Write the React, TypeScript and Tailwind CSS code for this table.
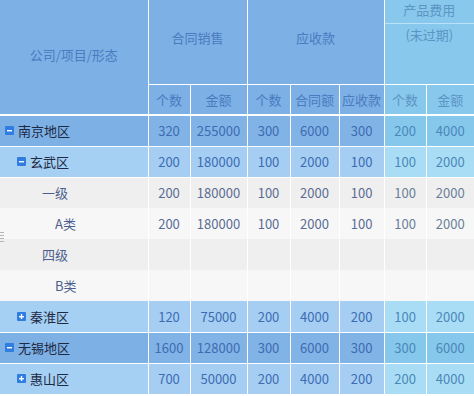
import React from "react";

type Row = {
  name: string;
  level: 1 | 2 | 3 | 4;
  icon?: "minus" | "plus";
  vals: string[];
};

const rows: Row[] = [
  { name: "南京地区", level: 1, icon: "minus", vals: ["320", "255000", "300", "6000", "300", "200", "4000"] },
  { name: "玄武区", level: 2, icon: "minus", vals: ["200", "180000", "100", "2000", "100", "100", "2000"] },
  { name: "一级", level: 3, vals: ["200", "180000", "100", "2000", "100", "100", "2000"] },
  { name: "A类", level: 4, vals: ["200", "180000", "100", "2000", "100", "100", "2000"] },
  { name: "四级", level: 3, vals: ["", "", "", "", "", "", ""] },
  { name: "B类", level: 4, vals: ["", "", "", "", "", "", ""] },
  { name: "秦淮区", level: 2, icon: "plus", vals: ["120", "75000", "200", "4000", "200", "100", "2000"] },
  { name: "无锡地区", level: 1, icon: "minus", vals: ["1600", "128000", "300", "6000", "300", "300", "6000"] },
  { name: "惠山区", level: 2, icon: "plus", vals: ["700", "50000", "200", "4000", "200", "200", "4000"] },
];

function ToggleIcon({ type }: { type: "minus" | "plus" }) {
  return (
    <svg width="9" height="9" viewBox="0 0 9 9" className="shrink-0">
      <rect x="0" y="0" width="9" height="9" rx="1" fill="#2f7de1" />
      <rect x="2" y="4" width="5" height="1.4" fill="#fff" />
      {type === "plus" && <rect x="3.8" y="2" width="1.4" height="5" fill="#fff" />}
    </svg>
  );
}

function rowStyle(r: Row, i: number) {
  if (r.level === 1) {
    return {
      name: "bg-[#7db0e5] text-[#1d2a44]",
      num: "bg-[#82b3e6] text-[#3c6cb2]",
      prod: "bg-[#86c7ec] text-[#4a88b8]",
    };
  }
  if (r.level === 2) {
    return {
      name: "bg-[#a5cff3] text-[#1d2a44]",
      num: "bg-[#a5cef2] text-[#3c6cb2]",
      prod: "bg-[#a9ddf5] text-[#4a88b8]",
    };
  }
  const odd = i % 2 === 0;
  return {
    name: odd ? "bg-[#efefef] text-[#4c5f8e]" : "bg-[#f7f7f7] text-[#4c5f8e]",
    num: odd ? "bg-[#efefef] text-[#5a6c92]" : "bg-[#f7f7f7] text-[#5a6c92]",
    prod: odd ? "bg-[#efefef] text-[#6a8099]" : "bg-[#f7f7f7] text-[#6a8099]",
  };
}

export default function App() {
  return (
    <div
      className="relative w-[474px] h-[396px] overflow-hidden bg-white text-[13px]"
      style={{ fontFamily: '"Noto Sans CJK SC", "Noto Sans", sans-serif' }}
    >
      <table className="w-[474px] table-fixed border-collapse">
        <colgroup>
          <col className="w-[148px]" />
          <col className="w-[42px]" />
          <col className="w-[57px]" />
          <col className="w-[43px]" />
          <col className="w-[49px]" />
          <col className="w-[45px]" />
          <col className="w-[42px]" />
          <col className="w-[48px]" />
        </colgroup>
        <thead>
          <tr className="h-[23px]">
            <th rowSpan={3} className="bg-[#7db0e5] text-[#4a7bc0] font-normal border border-white border-b-2 border-t-0 border-l-0 pb-[4px]">
              公司/项目/形态
            </th>
            <th colSpan={2} rowSpan={2} className="bg-[#7db0e5] text-[#4a7bc0] font-normal border border-white border-t-0 pb-[8px]">
              合同销售
            </th>
            <th colSpan={3} rowSpan={2} className="bg-[#7db0e5] text-[#4a7bc0] font-normal border border-white border-t-0 pb-[8px]">
              应收款
            </th>
            <th colSpan={2} className="bg-[#87c8ec] text-[#5c94c4] font-normal border border-[#b8e2f6] border-t-0 border-r-0 border-l-white leading-none pb-[3px]">
              产品费用
            </th>
          </tr>
          <tr className="h-[61px]">
            <th colSpan={2} className="bg-[#87c8ec] text-[#5c94c4] font-normal align-top pt-[4px] border border-white border-t-[#b8e2f6] border-r-0 leading-none">
              (未过期)
            </th>
          </tr>
          <tr className="h-[31px]">
            {["个数", "金额", "个数", "合同额", "应收款"].map((t, i) => (
              <th key={i} className="bg-[#7db0e5] text-[#4a7bc0] font-normal border border-white border-b-2 px-0 whitespace-nowrap">
                {t}
              </th>
            ))}
            {["个数", "金额"].map((t, i) => (
              <th key={i} className={`bg-[#87c8ec] text-[#5c94c4] font-normal border border-white border-b-2 ${i === 1 ? "border-r-0" : ""}`}>
                {t}
              </th>
            ))}
          </tr>
        </thead>
        <tbody>
          {rows.map((r, i) => {
            const s = rowStyle(r, i);
            const pad =
              r.level === 1 ? "pl-[5px]" : r.level === 2 ? "pl-[17px]" : r.level === 3 ? "pl-[42px]" : "pl-[55px]";
            const bc = r.level <= 2 ? "border-white" : "border-white border-y-transparent";
            return (
              <tr key={i} className="h-[31px]">
                <td className={`${s.name} ${bc} border border-l-0 ${pad} whitespace-nowrap`}>
                  <div className="flex items-center gap-[4px]">
                    {r.icon && <ToggleIcon type={r.icon} />}
                    <span>{r.name}</span>
                  </div>
                </td>
                {r.vals.map((v, j) => (
                  <td
                    key={j}
                    className={`${j >= 5 ? s.prod : s.num} ${bc} border ${j === 6 ? "border-r-0" : ""} text-center whitespace-nowrap px-0`}
                  >
                    {v}
                  </td>
                ))}
              </tr>
            );
          })}
        </tbody>
      </table>
      <div className="absolute left-0 top-[232px] flex flex-col gap-[2px]">
        <div className="w-[4px] h-[1px] bg-[#b5b5b5]" />
        <div className="w-[4px] h-[1px] bg-[#b5b5b5]" />
        <div className="w-[4px] h-[1px] bg-[#b5b5b5]" />
        <div className="w-[4px] h-[1px] bg-[#b5b5b5]" />
      </div>
    </div>
  );
}
